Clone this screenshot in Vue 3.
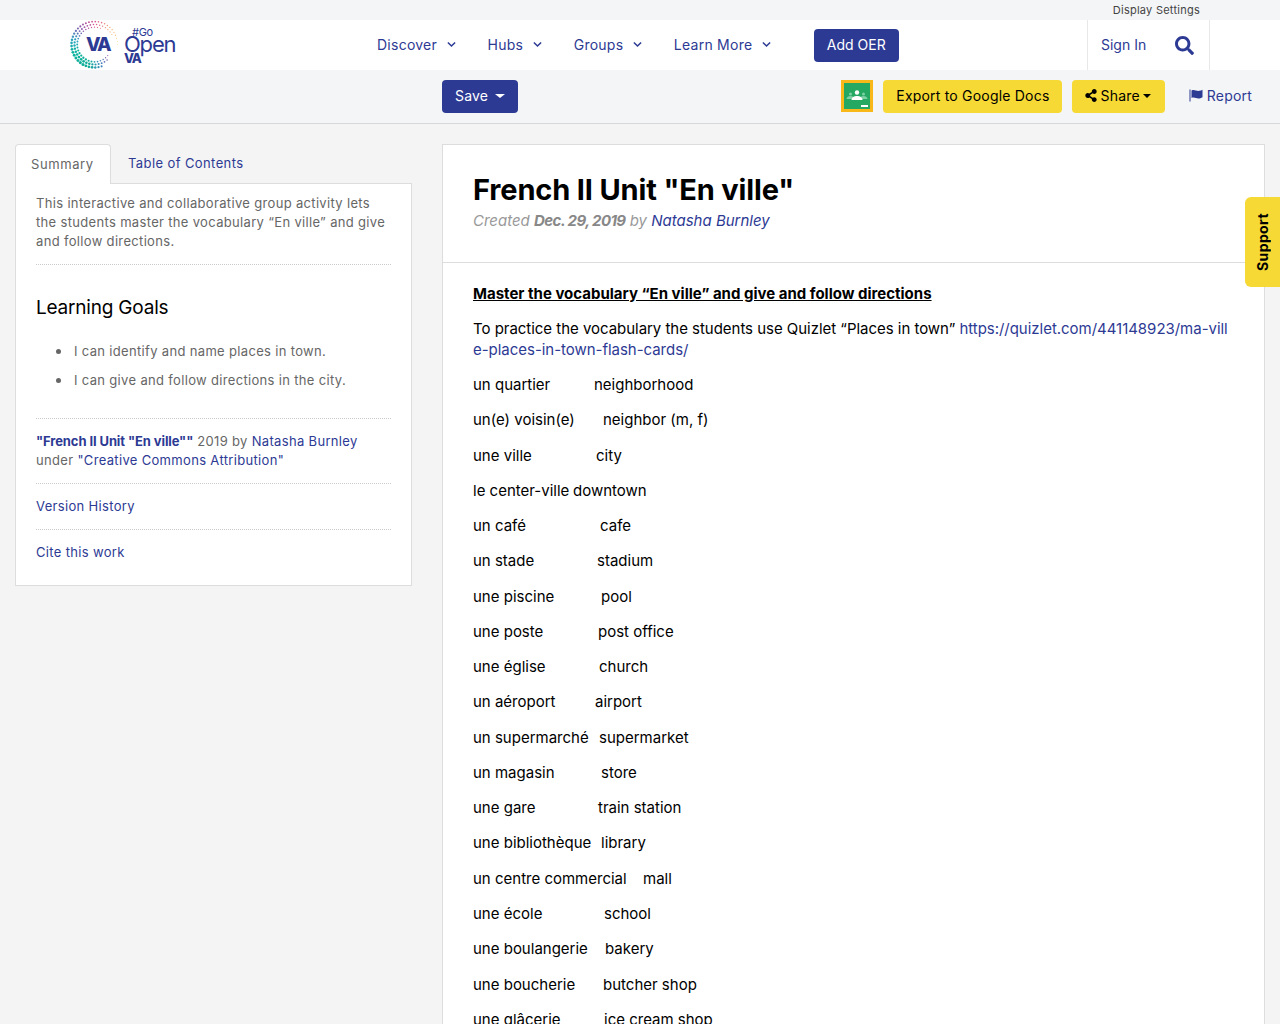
<template>
	<div class="page">
		<div class="topbar"><span>Display Settings</span></div>

		<header class="header">
			<div class="logo">
				<svg class="logo-ring" viewBox="0 0 50 50" width="50" height="50">
					<circle v-for="(d, i) in ringDots" :key="i" :cx="d.x" :cy="d.y" :r="d.r" :fill="d.color" />
				</svg>
				<span class="logo-va">VA</span>
				<div class="logo-words">
					<span class="logo-go">#Go</span>
					<span class="logo-open">Open</span>
					<span class="logo-small">VA</span>
				</div>
			</div>
			<nav class="nav">
				<a v-for="item in navItems" :key="item" class="nav-item">
					{{ item }}
					<svg class="chevron" viewBox="0 0 10 7" width="9" height="7"><path d="M1 1.2l4 4 4-4" fill="none" stroke="currentColor" stroke-width="1.7" /></svg>
				</a>
				<button class="btn btn-navy add-oer">Add OER</button>
			</nav>
			<div class="account">
				<a class="sign-in">Sign In</a>
				<svg class="search" viewBox="0 0 512 512" width="19" height="19"><path fill="currentColor" d="M505 442.7L405.3 343c-4.5-4.5-10.6-7-17-7H372c27.6-35.3 44-79.7 44-128C416 93.1 322.9 0 208 0S0 93.1 0 208s93.1 208 208 208c48.3 0 92.7-16.4 128-44v16.3c0 6.4 2.5 12.5 7 17l99.7 99.7c9.4 9.4 24.6 9.4 33.9 0l28.3-28.3c9.4-9.4 9.4-24.6.1-34zM208 336c-70.7 0-128-57.2-128-128 0-70.7 57.2-128 128-128 70.7 0 128 57.2 128 128 0 70.7-57.2 128-128 128z" /></svg>
			</div>
		</header>

		<div class="actions">
			<button class="btn btn-navy save">Save <span class="caret caret-wide"></span></button>
			<div class="actions-right">
				<div class="classroom">
					<svg viewBox="0 0 26 26" width="26" height="26">
						<rect width="26" height="26" fill="#24a862" />
						<circle cx="6.5" cy="11" r="1.5" fill="#7fd0a4" />
						<circle cx="19.5" cy="11" r="1.5" fill="#7fd0a4" />
						<path d="M2.5 16c0-2 2-3 4-3s4 1 4 3zM15.5 16c0-2 2-3 4-3s4 1 4 3z" fill="#7fd0a4" />
						<circle cx="13" cy="9.5" r="2.2" fill="#fff" />
						<path d="M7.5 17c0-2.600 2.800-4 5.500-4s5.500 1.400 5.500 4z" fill="#fff" />
						<rect x="17" y="22" width="7" height="2" fill="#fff" />
					</svg>
				</div>
				<button class="btn btn-yellow export">Export to Google Docs</button>
				<button class="btn btn-yellow share">
					<svg viewBox="0 0 448 512" width="12" height="13"><path fill="currentColor" d="M352 320c-22.608 0-43.387 7.819-59.79 20.895l-102.486-64.054a96.551 96.551 0 0 0 0-41.683l102.486-64.054C308.613 184.181 329.392 192 352 192c53.019 0 96-42.981 96-96S405.019 0 352 0s-96 42.981-96 96c0 7.158.79 14.13 2.276 20.841L155.79 180.895C139.387 167.819 118.608 160 96 160c-53.019 0-96 42.981-96 96s42.981 96 96 96c22.608 0 43.387-7.819 59.79-20.895l102.486 64.054A96.301 96.301 0 0 0 256 416c0 53.019 42.981 96 96 96s96-42.981 96-96-42.981-96-96-96z" /></svg>
					Share <span class="caret"></span>
				</button>
				<a class="report">
					<svg viewBox="0 0 14 13" width="14" height="13"><path fill="currentColor" d="M0.500 0.500h1v12h-1zM2.500 1.500c3-1.500 5 1 8 0.300 1-.2 2-.6 3-1.100v7.500c-1 .6-2 1-3 1.200-3 .6-5-1.800-8-.4z" /></svg>
					Report
				</a>
			</div>
		</div>

		<main class="content">
			<aside class="side">
				<div class="tabs">
					<a class="tab active">Summary</a>
					<a class="tab">Table of Contents</a>
				</div>
				<div class="panel">
					<p class="summary">This interactive and collaborative group activity lets the students master the vocabulary “En ville” and give and follow directions.</p>
					<h2 class="goals-title">Learning Goals</h2>
					<ul class="goals">
						<li>I can identify and name places in town.</li>
						<li>I can give and follow directions in the city.</li>
					</ul>
					<div class="panel-row attribution">
						<a class="strong">"French II Unit "En ville""</a> 2019 by <a>Natasha Burnley</a><br />
						under <a>"Creative Commons Attribution"</a>
					</div>
					<div class="panel-row"><a>Version History</a></div>
					<div class="panel-row"><a>Cite this work</a></div>
				</div>
			</aside>

			<article class="card">
				<div class="card-head">
					<h1>French II Unit "En ville"</h1>
					<p class="byline">Created <b>Dec. 29, 2019</b> by <a>Natasha Burnley</a></p>
				</div>
				<div class="card-body">
					<p class="lead">Master the vocabulary “En ville” and give and follow directions</p>
					<p class="intro">To practice the vocabulary the students use Quizlet “Places in town” <a class="url">https://quizlet.com/441148923/ma-ville-places-in-town-flash-cards/</a></p>
					<p v-for="row in vocab" :key="row.term">
						<span class="term" :style="{ width: row.at + 'px' }">{{ row.term }}</span>{{ row.meaning }}
					</p>
				</div>
			</article>
		</main>

		<button class="support"><span>Support</span></button>
	</div>
</template>

<script setup>
const navItems = ["Discover", "Hubs", "Groups", "Learn More"]

// at = left edge of the translation, measured from the start of the line
const vocab = [
	{ term: "un quartier", meaning: "neighborhood", at: 121 },
	{ term: "un(e) voisin(e)", meaning: "neighbor (m, f)", at: 130 },
	{ term: "une ville", meaning: "city", at: 123 },
	{ term: "le center-ville", meaning: "downtown", at: 100 },
	{ term: "un café", meaning: "cafe", at: 127 },
	{ term: "un stade", meaning: "stadium", at: 124 },
	{ term: "une piscine", meaning: "pool", at: 128 },
	{ term: "une poste", meaning: "post office", at: 125 },
	{ term: "une église", meaning: "church", at: 126 },
	{ term: "un aéroport", meaning: "airport", at: 122 },
	{ term: "un supermarché", meaning: "supermarket", at: 126 },
	{ term: "un magasin", meaning: "store", at: 128 },
	{ term: "une gare", meaning: "train station", at: 125 },
	{ term: "une bibliothèque", meaning: "library", at: 128 },
	{ term: "un centre commercial", meaning: "mall", at: 170 },
	{ term: "une école", meaning: "school", at: 131 },
	{ term: "une boulangerie", meaning: "bakery", at: 132 },
	{ term: "une boucherie", meaning: "butcher shop", at: 130 },
	{ term: "une glâcerie", meaning: "ice cream shop", at: 131 },
]

// colour stops along the ring, by angle counter-clockwise from east
const stops = [
	[0, [247, 214, 90]],
	[50, [244, 160, 110]],
	[90, [218, 84, 150]],
	[130, [140, 90, 175]],
	[165, [45, 160, 195]],
	[200, [15, 180, 160]],
	[255, [15, 172, 150]],
	[285, [60, 140, 190]],
	[320, [140, 85, 170]],
]

function colorAt(angle) {
	for (let i = 1; i < stops.length; i++) {
		if (angle <= stops[i][0]) {
			const [a0, c0] = stops[i - 1]
			const [a1, c1] = stops[i]
			const t = (angle - a0) / (a1 - a0)
			return `rgb(${c0.map((v, k) => Math.round(v + (c1[k] - v) * t)).join(",")})`
		}
	}
	return "rgb(140,85,170)"
}

const ringDots = []
const rows = [
	{ radius: 23, from: 0, to: 295, size: 1, step: 8 },
	{ radius: 20, from: 30, to: 310, size: 0.9, step: 9 },
	{ radius: 17.3, from: 70, to: 320, size: 0.75, step: 10 },
]
for (const row of rows) {
	for (let a = row.from; a <= row.to; a += row.step) {
		const rad = (a * Math.PI) / 180
		const grow = a < 235 ? a / 235 : Math.max(0, 1 - (a - 235) / 120)
		ringDots.push({
			x: 24.5 + row.radius * Math.cos(rad),
			y: 25.5 - row.radius * Math.sin(rad),
			r: (0.45 + 1.1 * grow) * row.size,
			color: colorAt(a),
		})
	}
}
</script>

<style>
html,
body {
	margin: 0;
	background: #f4f4f4;
}
</style>

<style scoped>
.page {
	height: 100vh;
	overflow: hidden;
	font-family: Inter, "Liberation Sans", sans-serif;
	color: #000;
	background: #f4f4f4;
}

a {
	color: #2d3a94;
	text-decoration: none;
}

.topbar {
	height: 20px;
	background: #f4f5f7;
	display: flex;
	justify-content: flex-end;
	align-items: center;
	padding-right: 80px;
	font-size: 11px;
	letter-spacing: 0.25px;
	color: #444;
}

.header {
	height: 50px;
	background: #fff;
	display: flex;
	align-items: stretch;
}

.logo {
	position: relative;
	width: 307px;
	margin-left: 70px;
	flex-shrink: 0;
}

.logo-ring {
	position: absolute;
	left: 0;
	top: -1px;
}

.logo-va {
	position: absolute;
	left: 16px;
	top: 13px;
	font-size: 19px;
	line-height: 23px;
	font-weight: 800;
	letter-spacing: -2px;
	color: #2d3a94;
}

.logo-words {
	position: absolute;
	left: 54px;
	top: 0;
	color: #2d3a94;
}

.logo-words span {
	position: absolute;
	white-space: nowrap;
}

.logo-go {
	left: 8px;
	top: 6px;
	font-size: 11px;
	line-height: 13px;
	letter-spacing: -0.3px;
}

.logo-open {
	left: 0;
	top: 10px;
	font-size: 22px;
	line-height: 28px;
	letter-spacing: -1.2px;
}

.logo-small {
	left: 0;
	top: 31px;
	font-size: 13px;
	line-height: 14px;
	font-weight: 800;
	letter-spacing: -1.2px;
}

.nav {
	display: flex;
	align-items: center;
	gap: 31.5px;
	font-size: 14px;
	letter-spacing: 0.25px;
}

.nav-item {
	display: flex;
	align-items: center;
	gap: 10px;
	padding-bottom: 1px;
}

.btn {
	font-family: inherit;
	font-size: 14px;
	letter-spacing: 0.2px;
	border: none;
	border-radius: 4px;
	height: 33px;
	padding: 0 13px 1px;
	display: inline-flex;
	align-items: center;
	white-space: nowrap;
}

.actions .btn {
	padding-bottom: 2px;
}

.btn-navy {
	background: #2d3a94;
	color: #fff;
}

.btn-yellow {
	background: #f6d935;
	color: #000;
}

.add-oer {
	margin-left: 11px;
	letter-spacing: 0;
}

.account {
	margin-left: auto;
	margin-right: 70px;
	width: 123px;
	box-sizing: border-box;
	border-left: 1px solid #e8e8e8;
	border-right: 1px solid #e8e8e8;
	padding-left: 13px;
	display: flex;
	align-items: center;
	gap: 29px;
	font-size: 14px;
}

.sign-in {
	padding-bottom: 2px;
}

.search {
	color: #2d3a94;
}

.actions {
	height: 53px;
	background: #f4f5f7;
	border-bottom: 1px solid #d8d8d8;
	display: flex;
	align-items: center;
	padding: 0 28px 0 442px;
}

.save {
	gap: 7px;
}

.caret {
	display: inline-block;
	border-left: 4px solid transparent;
	border-right: 4px solid transparent;
	border-top: 4px solid currentColor;
}

.caret-wide {
	border-left-width: 5px;
	border-right-width: 5px;
}

.actions-right {
	margin-left: auto;
	display: flex;
	align-items: center;
	gap: 10px;
}

.classroom {
	width: 32px;
	height: 32px;
	margin-bottom: 1px;
	box-sizing: border-box;
	border: 3px solid #f9b81a;
}

.classroom svg {
	display: block;
}

.share {
	gap: 3px;
	padding-right: 14px;
}

.report {
	margin-left: 14px;
	padding-bottom: 2px;
	display: inline-flex;
	align-items: center;
	gap: 4px;
	font-size: 14px;
	letter-spacing: 0.2px;
}

.content {
	display: grid;
	grid-template-columns: 397px 823px;
	gap: 30px;
	padding: 20px 15px 0;
}

.tabs {
	display: flex;
	height: 39px;
	font-size: 13px;
	position: relative;
	z-index: 1;
}

.tab {
	padding: 0 17px 0 15px;
	line-height: 39px;
	letter-spacing: 0.4px;
	box-sizing: border-box;
	height: 40px;
}

.tab.active {
	width: 96px;
	background: #fff;
	color: #666;
	letter-spacing: 0.6px;
	border: 1px solid #ddd;
	border-bottom: none;
	border-radius: 4px 4px 0 0;
}

.tab + .tab {
	padding-left: 17px;
}

.panel {
	background: #fff;
	border: 1px solid #ddd;
	padding: 10px 20px 23px;
	font-size: 13px;
	line-height: 19px;
	letter-spacing: 0.33px;
	color: #666;
}

.summary {
	margin: 0;
	padding-bottom: 13px;
	border-bottom: 1px dotted #ccc;
}

.goals-title {
	margin: 29px 0 0;
	font-size: 19px;
	line-height: 28px;
	font-weight: 400;
	letter-spacing: -0.2px;
	color: #000;
}

.goals {
	margin: 20px 0 0;
	padding: 0 0 0 38px;
	list-style: none;
}

.goals li {
	position: relative;
	margin-bottom: 10px;
}

.goals li::before {
	content: "";
	position: absolute;
	left: -18px;
	top: 7px;
	width: 5px;
	height: 5px;
	border-radius: 50%;
	background: #666;
}

.panel-row {
	border-top: 1px dotted #ccc;
	padding: 13px 0;
}

.goals + .panel-row {
	margin-top: 28px;
}

.panel-row:last-child {
	padding-bottom: 0;
}

.strong {
	font-weight: 700;
	letter-spacing: -0.1px;
}

.card {
	background: #fff;
	border: 1px solid #ddd;
	border-bottom: none;
	min-height: 1200px;
}

.card-head {
	padding: 26px 30px 31px;
	border-bottom: 1px solid #ddd;
}

.card-head h1 {
	margin: 0;
	font-size: 29px;
	line-height: 38px;
	font-weight: 700;
	letter-spacing: -0.15px;
}

.byline {
	margin: 2px 0 0;
	font-size: 15px;
	line-height: 20px;
	font-style: italic;
	color: #999;
}

.byline b {
	color: #888;
	letter-spacing: -0.6px;
}

.card-body {
	padding: 19.5px 30px 0;
	font-size: 15px;
	line-height: 21px;
}

.card-body p {
	margin: 0 0 14.27px;
}

.card-body .lead {
	font-weight: 700;
	text-decoration: underline;
}

.card-body .intro {
	letter-spacing: -0.03px;
}

.url {
	word-break: break-all;
}

.term {
	display: inline-block;
	white-space: nowrap;
}

.support {
	position: fixed;
	right: 0;
	top: 197px;
	width: 35px;
	height: 90px;
	padding: 0;
	border: none;
	border-radius: 6px 0 0 6px;
	background: #f6d935;
	color: #000;
	font-family: inherit;
	font-size: 14px;
	font-weight: 700;
	letter-spacing: 0.4px;
	display: flex;
	align-items: center;
	justify-content: center;
}

.support span {
	writing-mode: vertical-rl;
	transform: rotate(180deg);
}
</style>
